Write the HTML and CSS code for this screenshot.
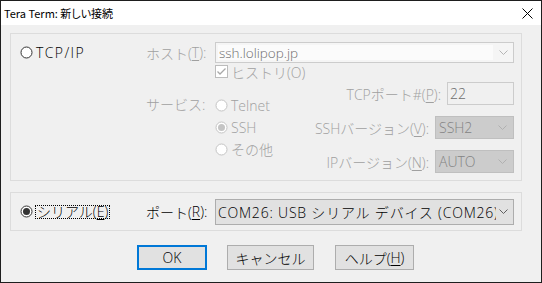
FILE: index.html
```html
<!DOCTYPE html>
<html lang="ja">
<head>
<meta charset="utf-8">
<title>Tera Term: 新しい接続</title>
<link rel="stylesheet" href="styles.css">
</head>
<body>
<div class="window">
  <div class="titlebar">
    <span class="title">Tera Term: 新しい接続</span>
    <svg class="close" width="11" height="11" viewBox="0 0 11 11"><path d="M0.5 0.5 L10.5 10.5 M10.5 0.5 L0.5 10.5" stroke="#000" stroke-width="1" fill="none"/></svg>
  </div>
  <div class="body">
    <div class="group g1">
      <div class="opt main-opt">
        <svg class="rb" width="13" height="13" viewBox="0 0 13 13"><circle cx="6.5" cy="6.5" r="5.5" fill="#fff" stroke="#333"/></svg>
        <span class="big">TCP/IP</span>
      </div>
      <div class="lbl dis host-lbl">ホスト(<u>T</u>):</div>
      <div class="combo host">
        <span class="edit">ssh.lolipop.jp</span>
        <svg class="chev" width="9" height="5" viewBox="0 0 9 5"><path d="M0.5 0.5 L4.5 4.5 L8.5 0.5" stroke="#b5b5b5" fill="none"/></svg>
      </div>
      <div class="opt check-row dis">
        <svg class="cb" width="13" height="13" viewBox="0 0 13 13"><rect x="0.5" y="0.5" width="12" height="12" fill="#fff" stroke="#bcbcbc"/><path d="M2.5 6.5 L5 9 L10.5 3.5" stroke="#a8a8a8" stroke-width="1.3" fill="none"/></svg>
        <span>ヒストリ(O)</span>
      </div>
      <div class="lbl dis svc-lbl">サービス:</div>
      <div class="svc-area">
        <div class="radios dis">
          <div class="opt sub-opt">
            <svg class="rb" width="13" height="13" viewBox="0 0 13 13"><circle cx="6.5" cy="6.5" r="5.5" fill="#fff" stroke="#c4c4c4"/></svg>
            <span>Telnet</span>
          </div>
          <div class="opt sub-opt">
            <svg class="rb" width="13" height="13" viewBox="0 0 13 13"><circle cx="6.5" cy="6.5" r="5.5" fill="#fff" stroke="#c4c4c4"/><circle cx="6.5" cy="6.5" r="3.5" fill="#c4c4c4"/></svg>
            <span>SSH</span>
          </div>
          <div class="opt sub-opt">
            <svg class="rb" width="13" height="13" viewBox="0 0 13 13"><circle cx="6.5" cy="6.5" r="5.5" fill="#fff" stroke="#c4c4c4"/></svg>
            <span>その他</span>
          </div>
        </div>
        <div class="fields">
          <div class="field">
            <span class="dis">TCPポート#(<u>P</u>):</span>
            <div class="textbox">22</div>
          </div>
          <div class="field">
            <span class="dis">SSHバージョン(<u>V</u>):</span>
            <div class="combo dcombo">
              <span class="val">SSH2</span>
              <svg class="chev" width="9" height="5" viewBox="0 0 9 5"><path d="M0.5 0.5 L4.5 4.5 L8.5 0.5" stroke="#b0b0b0" fill="none"/></svg>
            </div>
          </div>
          <div class="field">
            <span class="dis">IPバージョン(<u>N</u>):</span>
            <div class="combo dcombo">
              <span class="val">AUTO</span>
              <svg class="chev" width="9" height="5" viewBox="0 0 9 5"><path d="M0.5 0.5 L4.5 4.5 L8.5 0.5" stroke="#b0b0b0" fill="none"/></svg>
            </div>
          </div>
        </div>
      </div>
    </div>

    <div class="group g2">
      <div class="opt main-opt">
        <svg class="rb" width="13" height="13" viewBox="0 0 13 13"><circle cx="6.5" cy="6.5" r="5.5" fill="#fff" stroke="#333"/><circle cx="6.5" cy="6.5" r="3.5" fill="#333"/></svg>
        <span class="focus">シリアル(<u>E</u>)</span>
      </div>
      <div class="lbl">ポート(<u>R</u>):</div>
      <div class="combo port">
        <span class="val">COM26: USB シリアル デバイス (COM26)</span>
        <svg class="chev" width="9" height="5" viewBox="0 0 9 5"><path d="M0.5 0.5 L4.5 4.5 L8.5 0.5" stroke="#606060" fill="none"/></svg>
      </div>
    </div>

    <div class="buttons">
      <div class="btn default">OK</div>
      <div class="btn cancel">キャンセル</div>
      <div class="btn help">ヘルプ(<u>H</u>)</div>
    </div>
  </div>
</div>
</body>
</html>
```

FILE: styles.css
```css
html, body {
  margin: 0;
  padding: 0;
  background: #f0f0f0;
}

.window {
  width: 542px;
  height: 283px;
  box-sizing: border-box;
  border: 1px solid #1e1e1e;
  background: #f0f0f0;
  display: flex;
  flex-direction: column;
  font-family: "Open Sans", "Noto Sans CJK JP", sans-serif;
  font-size: 14px;
  font-weight: 300;
  color: #000;
}

.titlebar {
  height: 24px;
  flex: none;
  background: #fff;
  display: flex;
  align-items: center;
  justify-content: space-between;
  padding: 0 8px 0 3px;
}

.title {
  font-family: "Noto Sans CJK JP", sans-serif;
  font-weight: 400;
  font-size: 11px;
  line-height: 16px;
  font-feature-settings: "palt";
}

.close {
  display: block;
}

.body {
  flex: 1;
  padding: 8px 19px 0 9px;
  display: flex;
  flex-direction: column;
}

.group {
  border: 1px solid #dcdcdc;
  box-sizing: border-box;
}

.g1 {
  height: 148px;
  display: grid;
  grid-template-columns: 126px 69px 299px;
  grid-template-rows: 21px 17px 1fr;
  padding: 8px 0 0 9px;
}

.g2 {
  height: 39px;
  margin-top: 11px;
  display: grid;
  grid-template-columns: 126px 69px 299px;
  align-items: center;
  padding-left: 9px;
}

.dis {
  color: #a0a0a0;
}

u {
  text-decoration: underline;
  text-underline-offset: 2px;
}

.opt {
  display: flex;
  align-items: center;
  gap: 3px;
  white-space: nowrap;
}

.rb, .cb {
  display: block;
  flex: none;
}

.big {
  font-size: 14px;
  letter-spacing: 1.4px;
}

.lbl {
  display: flex;
  align-items: center;
  white-space: nowrap;
}

.combo {
  box-sizing: border-box;
  display: flex;
  align-items: center;
  justify-content: space-between;
  border: 1px solid #cccccc;
  padding-right: 6px;
  overflow: hidden;
  white-space: nowrap;
}

.host {
  background: #f5f5f5;
  padding: 2px 5px 2px 2px;
}

.host .edit {
  flex: 1;
  height: 100%;
  background: #fbfbfb;
  color: #6d6d6d;
  padding-left: 1px;
  display: flex;
  align-items: center;
  margin-right: 6px;
  font-size: 13.5px;
}

.chev {
  display: block;
  flex: none;
}

.check-row {
  grid-column: 3;
  grid-row: 2;
  align-self: center;
}

.svc-lbl {
  grid-column: 2;
  grid-row: 3;
  align-items: flex-start;
  padding-top: 15px;
  line-height: 20px;
}

.svc-area {
  grid-column: 3;
  grid-row: 3;
  display: flex;
  justify-content: space-between;
}

.radios {
  padding-top: 14px;
  display: flex;
  flex-direction: column;
}

.sub-opt {
  height: 22px;
}

.fields {
  margin-top: 2px;
  display: flex;
  flex-direction: column;
  align-items: flex-end;
  gap: 11px;
}

.field {
  display: flex;
  align-items: center;
  gap: 6px;
  height: 23px;
  white-space: nowrap;
}

.textbox {
  box-sizing: border-box;
  width: 67px;
  height: 23px;
  border: 1px solid #cccccc;
  background: #f0f0f0;
  color: #6d6d6d;
  padding-left: 2px;
  display: flex;
  align-items: center;
}

.dcombo {
  width: 79px;
  height: 23px;
  background: #cccccc;
  border-color: #bfbfbf;
  color: #838383;
  padding-left: 3px;
}

.port {
  height: 26px;
  background: #e1e1e1;
  border-color: #adadad;
  padding-left: 2px;
  padding-right: 5px;
}

.port .val {
  overflow: hidden;
  flex: 1;
  margin-right: 3px;
  letter-spacing: 0.8px;
}

.focus {
  outline: 1px dotted #000;
  outline-offset: 0;
  line-height: 12px;
  padding: 0 1px;
}

.buttons {
  margin-top: 14px;
  display: flex;
  padding-left: 127px;
  gap: 20px;
}

.btn {
  box-sizing: border-box;
  height: 25px;
  background: #e1e1e1;
  border: 1px solid #adadad;
  display: flex;
  align-items: center;
  justify-content: center;
  white-space: nowrap;
}

.default {
  width: 70px;
  border: 2px solid #0078d7;
}

.cancel {
  width: 87px;
}

.help {
  width: 79px;
  margin-left: 1px;
}
```
